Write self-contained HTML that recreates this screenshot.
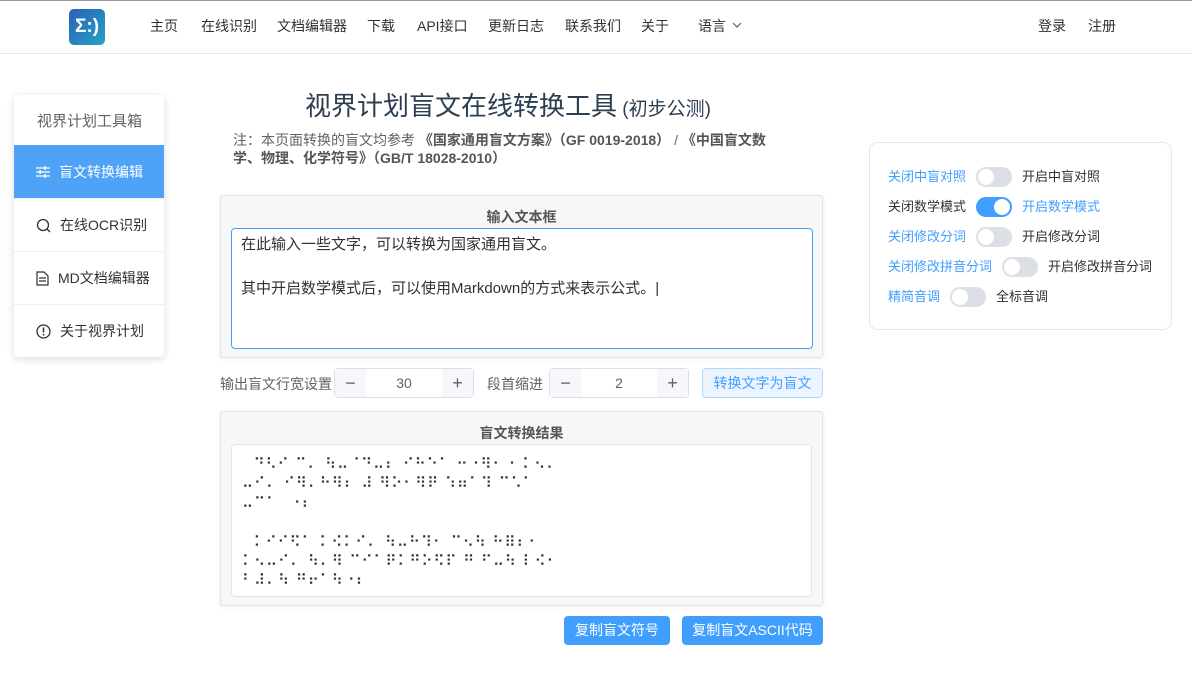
<!DOCTYPE html>
<html><head><meta charset="utf-8"><style>
*{box-sizing:border-box;margin:0;padding:0}
body{width:1192px;height:682px;overflow:hidden;background:#fff;font-family:"Liberation Sans","Noto Sans CJK SC",sans-serif;color:#303133;position:relative;font-size:14px}
.abs{position:absolute}
.hdr{left:0;top:0;width:1192px;height:54px;border-top:1px solid #999;border-bottom:1px solid #e8e8e8;background:#fff}
.logo{left:69px;top:9px;width:36px;height:36px;border-radius:5px;background:linear-gradient(135deg,#2a5fb8,#24a3c4);color:#fff;font-weight:bold;font-size:19px;line-height:36px;text-align:center}
.nav{top:17px;font-size:14px;color:#303133;line-height:18px}
.side{left:14px;top:95px;width:150px;height:262px;background:#fff;border-radius:4px;box-shadow:0 2px 8px rgba(0,0,0,.15)}
.side div{height:53px;border-top:1px solid #eee;display:flex;align-items:center;padding-left:22px;font-size:14px;color:#303133}
.side svg{margin-right:9px}
.title{left:305px;top:86px;font-size:26px;color:#2c3e50}
.note{left:233px;top:131px;width:560px;font-size:14px;line-height:18px;color:#606266}
.note b{color:#555}
.card{background:#f7f7f7;border:1px solid #e4e4e4;border-radius:3px;box-shadow:0 1px 4px rgba(0,0,0,.08)}
.ct{text-align:center;font-weight:bold;color:#555;font-size:14px}
.num{border:1px solid #dcdfe6;border-radius:4px;height:30px;display:flex;background:#fff}
.num span{width:31px;background:#f5f7fa;color:#606266;text-align:center;line-height:28px;font-size:18px}
.num i{flex:1;font-style:normal;text-align:center;line-height:28px;color:#606266}
.btn{background:#409eff;color:#fff;border-radius:4px;text-align:center;line-height:29px;font-size:14px}
.sw{width:36px;height:20px;border-radius:10px;background:#dcdfe6;position:absolute}
.sw::after{content:"";position:absolute;left:2px;top:2px;width:16px;height:16px;border-radius:50%;background:#fff}
.sw.on{background:#409eff}.sw.on::after{left:18px}
.rl{position:absolute;font-size:13px;line-height:18px}
.bl{color:#409eff}
.br{font-family:"DejaVu Sans",sans-serif;font-size:15px;line-height:19.4px;color:#303133;white-space:pre;letter-spacing:1px}
</style></head><body>
<div class="abs hdr"></div>
<div class="abs logo">Σ:)</div>
<div class="abs nav" style="left:150px">主页</div>
<div class="abs nav" style="left:201px">在线识别</div>
<div class="abs nav" style="left:277px">文档编辑器</div>
<div class="abs nav" style="left:367px">下载</div>
<div class="abs nav" style="left:417px">API接口</div>
<div class="abs nav" style="left:488px">更新日志</div>
<div class="abs nav" style="left:565px">联系我们</div>
<div class="abs nav" style="left:641px">关于</div>
<div class="abs nav" style="left:698px">语言</div>
<svg class="abs" style="left:732px;top:22px" width="10" height="7"><path d="M1 1l4 4 4-4" stroke="#606266" fill="none" stroke-width="1.2"/></svg>
<div class="abs nav" style="left:1038px">登录</div>
<div class="abs nav" style="left:1088px">注册</div>

<div class="abs side">
<div style="height:50px;border:0;color:#606266;font-size:15px;padding-left:23px">视界计划工具箱</div>
<div style="background:#4fa3f7;color:#fff;border:0"><svg width="14" height="12"><path d="M0 2h14M0 6h14M0 10h14" stroke="#fff" stroke-width="1.3"/><path d="M9 0v4M4 4v4M9 8v4" stroke="#fff" stroke-width="1.5"/></svg>盲文转换编辑</div>
<div><svg width="15" height="15"><circle cx="7" cy="7" r="5.5" stroke="#303133" fill="none" stroke-width="1.3"/><path d="M11 11l3 3" stroke="#303133" stroke-width="1.3"/></svg>在线OCR识别</div>
<div><svg width="13" height="15"><path d="M1 1h7l4 4v9H1z M3 7h7M3 10h7" stroke="#303133" fill="none" stroke-width="1.2"/></svg>MD文档编辑器</div>
<div><svg width="15" height="15"><circle cx="7.5" cy="7.5" r="6.5" stroke="#303133" fill="none" stroke-width="1.3"/><path d="M7.5 3.5v5M7.5 10v1.5" stroke="#303133" stroke-width="1.5"/></svg>关于视界计划</div>
</div>

<div class="abs title">视界计划盲文在线转换工具<span style="font-size:19px"> (初步公测)</span></div>
<div class="abs note">注：本页面转换的盲文均参考 <b>《国家通用盲文方案》（GF 0019-2018）</b> / <b>《中国盲文数学、物理、化学符号》（GB/T 18028-2010）</b></div>

<div class="abs card" style="left:220px;top:195px;width:603px;height:163px">
<div class="ct" style="margin-top:11px">输入文本框</div>
<div class="abs" style="left:10px;top:32px;width:582px;height:121px;background:#fff;border:1px solid #409eff;border-radius:4px;padding:5px 9px;font-size:15px;line-height:22px;color:#303133">在此输入一些文字，可以转换为国家通用盲文。<br><br>其中开启数学模式后，可以使用Markdown的方式来表示公式。|</div>
</div>

<div class="abs" style="left:220px;top:374px;color:#606266">输出盲文行宽设置</div>
<div class="abs num" style="left:334px;top:368px;width:140px"><span>−</span><i>30</i><span>+</span></div>
<div class="abs" style="left:487px;top:374px;color:#606266">段首缩进</div>
<div class="abs num" style="left:549px;top:368px;width:140px"><span>−</span><i>2</i><span>+</span></div>
<div class="abs" style="left:702px;top:368px;width:121px;height:30px;background:#ecf5ff;border:1px solid #b3d8ff;border-radius:4px;color:#409eff;text-align:center;line-height:28px">转换文字为盲文</div>

<div class="abs card" style="left:220px;top:411px;width:603px;height:195px">
<div class="ct" style="margin-top:11px">盲文转换结果</div>
<div class="abs br" style="left:10px;top:32px;width:581px;height:153px;background:#fff;border:1px solid #e4e4e4;border-radius:4px;padding:10px 10px;overflow:hidden">  ⠙⠣⠊ ⠉⠄ ⠳⠤⠈⠙⠤⠆ ⠊⠓⠑⠁ ⠒⠐⠻⠂⠐ ⠅⠢⠄
⠤⠊⠄ ⠊⠻⠄⠓⠻⠆ ⠼ ⠻⠕⠂⠻⠟ ⠱⠶⠁⠹ ⠉⠡⠁
⠤⠉⠁  ⠐⠆

  ⠅⠊⠊⠫⠁ ⠅⠪⠅⠊⠄ ⠳⠤⠓⠹⠂ ⠉⠢⠳ ⠓⠿⠆⠂
⠅⠢⠤⠊⠄ ⠳⠄⠻ ⠉⠊⠁⠟⠅⠛⠕⠫⠏ ⠛ ⠋⠤⠳ ⠇⠪⠂
⠃⠼⠄⠳ ⠛⠖⠁⠳⠐⠆</div>
</div>

<div class="abs btn" style="left:564px;top:616px;width:106px">复制盲文符号</div>
<div class="abs btn" style="left:682px;top:616px;width:141px">复制盲文ASCII代码</div>

<div class="abs" style="left:869px;top:142px;width:303px;height:188px;border:1px solid #e4e7ed;border-radius:9px;background:#fff"></div>
<div class="rl bl" style="left:888px;top:168px">关闭中盲对照</div><div class="sw" style="left:976px;top:167px"></div><div class="rl" style="left:1022px;top:168px">开启中盲对照</div>
<div class="rl" style="left:888px;top:198px">关闭数学模式</div><div class="sw on" style="left:976px;top:197px"></div><div class="rl bl" style="left:1022px;top:198px">开启数学模式</div>
<div class="rl bl" style="left:888px;top:228px">关闭修改分词</div><div class="sw" style="left:976px;top:227px"></div><div class="rl" style="left:1022px;top:228px">开启修改分词</div>
<div class="rl bl" style="left:888px;top:258px">关闭修改拼音分词</div><div class="sw" style="left:1002px;top:257px"></div><div class="rl" style="left:1048px;top:258px">开启修改拼音分词</div>
<div class="rl bl" style="left:888px;top:288px">精简音调</div><div class="sw" style="left:950px;top:287px"></div><div class="rl" style="left:996px;top:288px">全标音调</div>
</body></html>
